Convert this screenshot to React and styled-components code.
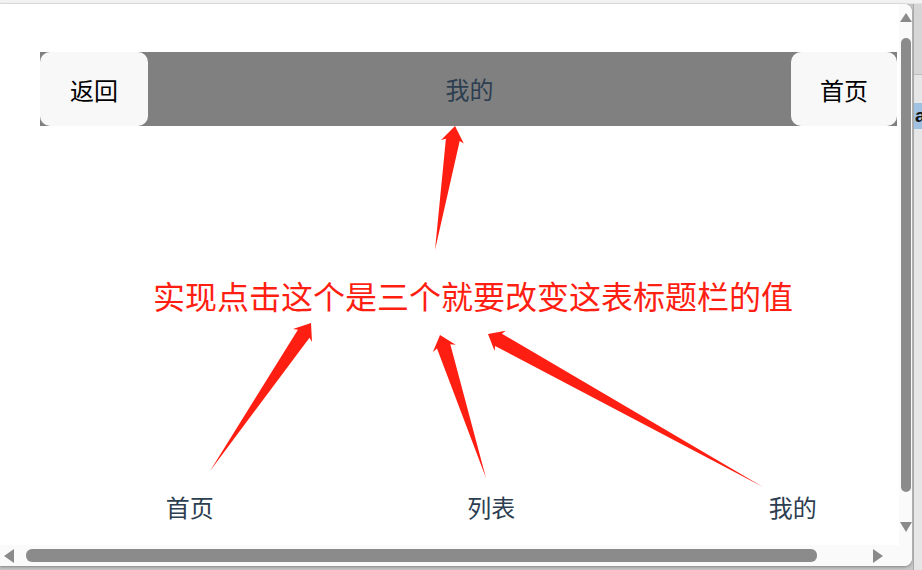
import React from "react";
import styled, { createGlobalStyle } from "styled-components";

const GlobalStyle = createGlobalStyle`
  html, body {
    margin: 0;
    padding: 0;
    height: 100%;
    overflow: hidden;
    background: #c6c6c6;
    font-family: "Noto Sans CJK SC", "Noto Sans", sans-serif;
  }
`;

const Page = styled.div`
  display: flex;
  flex-direction: column;
  width: 922px;
  height: 570px;
`;

const TopStrip = styled.div`
  height: 3px;
  background: #f2f2f2;
  border-bottom: 1px solid #e4e4e4;
`;

const Row = styled.div`
  display: flex;
  flex: 1;
`;

const Window = styled.div`
  display: grid;
  grid-template-columns: 899px 14px;
  grid-template-rows: 541px 21px;
  width: 913px;
  height: 562px;
  background: #ffffff;
  border-radius: 0 8px 8px 0;
  box-shadow: 0 1px 3px rgba(0, 0, 0, 0.35);
  overflow: hidden;
`;

const Viewport = styled.div`
  position: relative;
  overflow: hidden;
`;

const Content = styled.div`
  display: flex;
  flex-direction: column;
  padding: 48px 0 0 40px;
`;

const Header = styled.div`
  display: flex;
  align-items: center;
  justify-content: space-between;
  width: 857px;
  height: 74px;
  background: #808080;
`;

const NavButton = styled.div`
  display: flex;
  align-items: center;
  justify-content: center;
  width: ${(p) => p.$w}px;
  height: 74px;
  background: #f8f8f8;
  border-radius: 10px;
  color: #000;
  font-size: 24px;
`;

const Title = styled.div`
  color: #2c3e50;
  font-size: 24px;
  margin-top: -2px;
`;

const Note = styled.div`
  margin: 149px 0 0 113px;
  color: #ff1f12;
  font-size: 32px;
  line-height: 40px;
  white-space: nowrap;
`;

const TabBar = styled.div`
  display: grid;
  grid-template-columns: repeat(3, 301.5px);
  width: 905px;
  margin: 177px 0 0 -1px;
`;

const Tab = styled.div`
  text-align: center;
  color: #2c3e50;
  font-size: 24px;
  line-height: 30px;
`;

const Overlay = styled.svg`
  position: absolute;
  left: 0;
  top: 0;
  pointer-events: none;
`;

const VScroll = styled.div`
  display: flex;
  flex-direction: column;
  align-items: center;
  background: #fafafa;
  padding-top: 9px;
`;

const Thumb = styled.div`
  background: #8b8b8b;
  border-radius: 6px;
  width: ${(p) => p.$w}px;
  height: ${(p) => p.$h}px;
  margin: ${(p) => p.$m};
`;

const HScroll = styled.div`
  display: flex;
  align-items: center;
  background: #fafafa;
  padding-left: 4px;
`;

const Corner = styled.div`
  background: #fafafa;
`;

const SideStrip = styled.div`
  display: flex;
  flex-direction: column;
  width: 8px;
  margin-left: 1px;
  background: #e6e6e6;
  border-left: 1px solid #a9a9a9;
  overflow: hidden;
`;

const StripTop = styled.div`
  height: 70px;
  background: #d6d6d6;
  border-bottom: 1px solid #bdbdbd;
`;

const StripItem = styled.div`
  margin-top: 28px;
  height: 26px;
  background: #9fc2e2;
  font-family: "Liberation Sans", sans-serif;
  font-size: 19px;
  font-weight: bold;
  line-height: 26px;
  padding-left: 1px;
  color: #111;
  white-space: nowrap;
`;

const Tri = ({ dir }) => {
  const pts = {
    up: "0,9 6,0 12,9",
    down: "0,0 12,0 6,10",
    left: "10,0 10,14 0,7",
    right: "0,0 10,7 0,14",
  }[dir];
  const vert = dir === "up" || dir === "down";
  return (
    <svg width={vert ? 12 : 10} height={vert ? (dir === "up" ? 9 : 10) : 14}>
      <polygon points={pts} fill="#8a8a8a" />
    </svg>
  );
};

// annotation arrows: tail -> tip, tapered shaft
const arrows = [
  { t: [435, 250], p: [455, 126], h: 14, w: 11.5, s: 7 },
  { t: [210, 471], p: [311, 323], h: 13, w: 11.5, s: 7 },
  { t: [486, 478], p: [440, 335], h: 12, w: 12, s: 7 },
  { t: [763, 487], p: [488, 334], h: 12, w: 11.5, s: 7 },
];

const arrowPoints = ({ t, p, h, w, s }) => {
  const dx = p[0] - t[0];
  const dy = p[1] - t[1];
  const len = Math.hypot(dx, dy);
  const ux = dx / len;
  const uy = dy / len;
  const nx = -uy;
  const ny = ux;
  const bx = p[0] - ux * h;
  const by = p[1] - uy * h;
  const pt = (x, y) => `${x.toFixed(1)},${y.toFixed(1)}`;
  return [
    pt(t[0], t[1]),
    pt(bx + nx * s, by + ny * s),
    pt(bx - ux * 2 + nx * w, by - uy * 2 + ny * w),
    pt(p[0], p[1]),
    pt(bx - ux * 2 - nx * w, by - uy * 2 - ny * w),
    pt(bx - nx * s, by - ny * s),
  ].join(" ");
};

const App = () => {
  return (
    <>
      <GlobalStyle />
      <Page>
        <TopStrip />
        <Row>
          <Window>
            <Viewport>
              <Content>
                <Header>
                  <NavButton $w={108}>返回</NavButton>
                  <Title>我的</Title>
                  <NavButton $w={106}>首页</NavButton>
                </Header>
                <Note>实现点击这个是三个就要改变这表标题栏的值</Note>
                <TabBar>
                  <Tab>首页</Tab>
                  <Tab>列表</Tab>
                  <Tab>我的</Tab>
                </TabBar>
              </Content>
              <Overlay width="899" height="541" viewBox="0 4 899 541">
                {arrows.map((a, i) => (
                  <polygon key={i} points={arrowPoints(a)} fill="#ff1f12" />
                ))}
              </Overlay>
            </Viewport>
            <VScroll>
              <Tri dir="up" />
              <Thumb $w={10} $h={454} $m="16px 0 30px 0" />
              <Tri dir="down" />
            </VScroll>
            <HScroll>
              <Tri dir="left" />
              <Thumb $w={791} $h={13} $m="0 56px 0 12px" />
              <Tri dir="right" />
            </HScroll>
            <Corner />
          </Window>
          <SideStrip>
            <StripTop />
            <StripItem>a</StripItem>
          </SideStrip>
        </Row>
      </Page>
    </>
  );
};

export default App;
